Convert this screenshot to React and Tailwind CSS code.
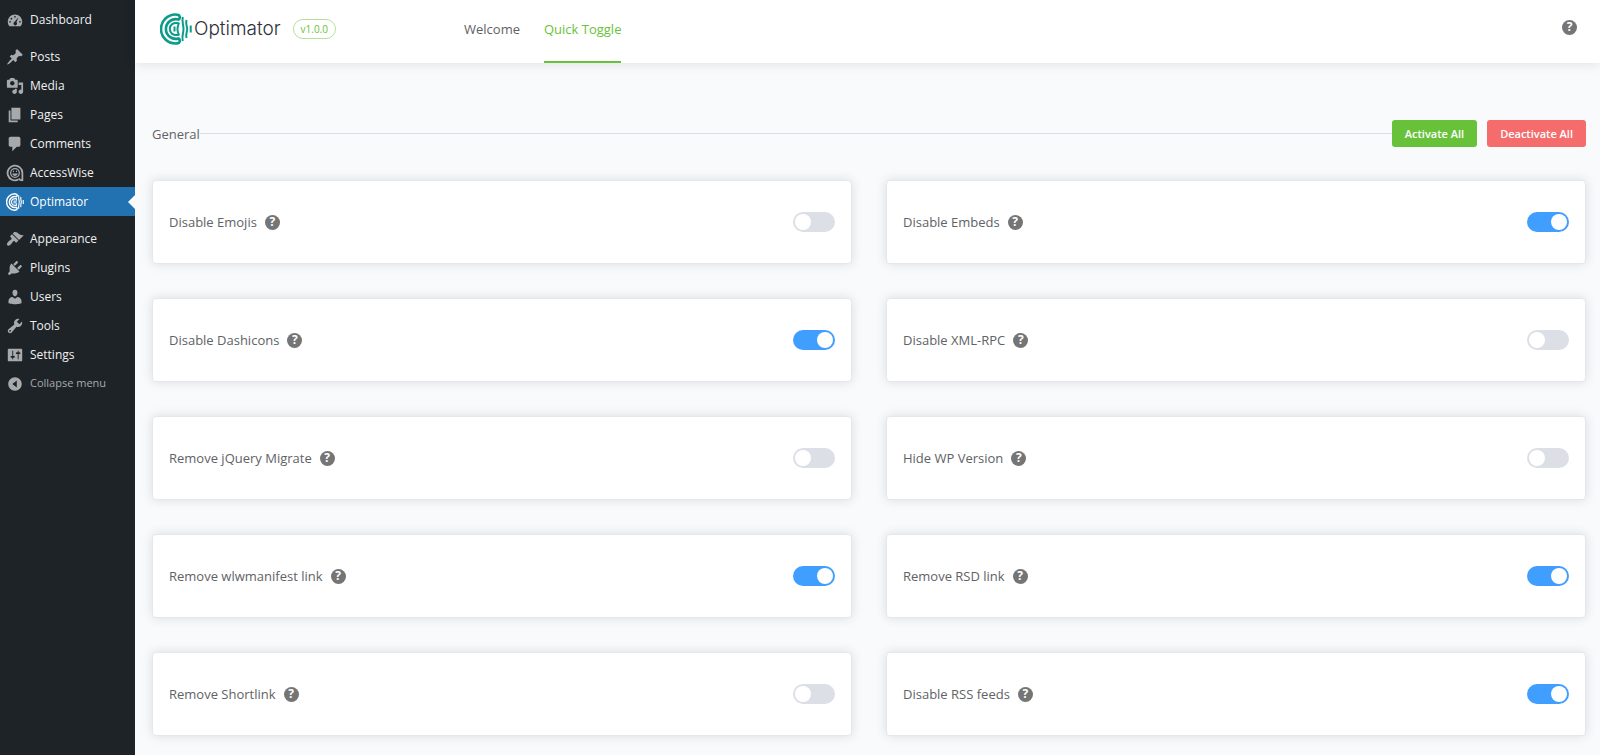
import { useState } from "react";

const icons = {
    dashboard:
        "M3.76 17h12.48c1.1-1.37 1.76-3.11 1.76-5 0-4.42-3.58-8-8-8s-8 3.58-8 8c0 1.89.66 3.63 1.76 5zM10 5.500c.55 0 1 .45 1 1s-.45 1-1 1-1-.45-1-1 .45-1 1-1zM6 7.500c.55 0 1 .45 1 1s-.45 1-1 1-1-.45-1-1 .45-1 1-1zM15.500 11c.55 0 1 .45 1 1s-.45 1-1 1-1-.45-1-1 .45-1 1-1zM4.500 11c.55 0 1 .45 1 1s-.45 1-1 1-1-.45-1-1 .45-1 1-1zM13.800 7l-2.200 5.500c.4.3.7.9.7 1.500 0 1.100-.9 2-2 2s-2-.9-2-2 .6-1.700 1.300-2z",
    posts: "M10.44 3.02l1.82-1.82 6.36 6.35-1.83 1.82c-1.05-.68-2.48-.57-3.41.36l-.75.75c-.92.93-1.04 2.35-.35 3.41l-1.83 1.82-2.41-2.41-2.8 2.79c-.42.42-3.38 2.71-3.8 2.29s1.86-3.39 2.28-3.81l2.79-2.79L4.1 9.36l1.83-1.82c1.05.69 2.48.57 3.4-.36l.75-.75c.93-.92 1.05-2.35.36-3.41z",
    media: "M13 11V4c0-.55-.45-1-1-1h-1.67L9 1H5L3.67 3H2c-.55 0-1 .45-1 1v7c0 .55.45 1 1 1h10c.55 0 1-.45 1-1zM7 4.5c1.38 0 2.5 1.12 2.5 2.5S8.38 9.5 7 9.5 4.5 8.38 4.5 7 5.62 4.5 7 4.5zM14 6h5v10.5c0 1.38-1.12 2.5-2.5 2.5S14 17.88 14 16.5s1.12-2.5 2.5-2.5c.17 0 .34.02.5.05V9h-3V6zm-4 8.05V13h2v3.5c0 1.38-1.12 2.5-2.5 2.5S7 17.88 7 16.5 8.12 14 9.5 14c.17 0 .34.02.5.05z",
    pages: "M6 15V2h10v13H6zm-1 1h8v2H3V5h2v11z",
    comments:
        "M5 2h9c1.1 0 2 .9 2 2v7c0 1.1-.9 2-2 2h-2l-5 5v-5H5c-1.1 0-2-.9-2-2V4c0-1.1.9-2 2-2z",
    appearance:
        "M14.48 11.06L7.41 3.99l1.5-1.5c.5-.56 2.3-.47 3.51.32 1.21.8 1.43 1.28 2.91 2.1 1.18.64 2.45 1.26 4.45.85zm-.71.71L6.7 4.7 4.93 6.47c-.39.39-.39 1.02 0 1.41l1.06 1.06c.39.39.39 1.03 0 1.42-.6.6-1.43 1.11-2.21 1.69-.35.26-.7.53-1.01.84C1.43 14.23.4 16.08 1.4 17.07c.99 1 2.84-.03 4.18-1.36.31-.31.58-.66.85-1.02.57-.78 1.08-1.61 1.69-2.21.39-.39 1.02-.39 1.41 0l1.06 1.06c.39.39 1.02.39 1.41 0z",
    plugins:
        "M13.11 4.36L9.87 7.6 8 5.73l3.24-3.24c.35-.34 1.05-.2 1.56.32.52.51.66 1.21.31 1.55zm-8 1.77l.91-1.12 9.01 9.01-1.19.84c-.71.71-2.63 1.16-3.82 1.16H6.14L4.9 17.26c-.59.59-1.54.59-2.12 0-.59-.58-.59-1.53 0-2.12l1.24-1.24v-3.88c0-1.13.4-3.19 1.09-3.89zm7.26 3.97l3.24-3.24c.34-.35 1.04-.21 1.55.31.52.51.66 1.21.31 1.55l-3.24 3.25z",
    users: "M10 9.25c-2.27 0-2.73-3.44-2.73-3.44C7 4.02 7.82 2 9.97 2c2.16 0 2.98 2.02 2.71 3.81 0 0-.41 3.44-2.68 3.44zm0 2.57L12.72 10c2.39 0 4.52 2.33 4.52 4.53v2.49s-3.65 1.13-7.24 1.13c-3.65 0-7.24-1.13-7.24-1.13v-2.49c0-2.25 1.94-4.48 4.47-4.48z",
    tools: "M16.68 9.77c-1.34 1.34-3.3 1.67-4.95.99l-5.41 6.52c-.99.99-2.59.99-3.58 0s-.99-2.59 0-3.57l6.52-5.42c-.68-1.65-.35-3.61.99-4.95 1.28-1.28 3.12-1.62 4.72-1.06l-2.89 2.89 2.82 2.82 2.86-2.87c.53 1.58.18 3.39-1.08 4.65zM3.81 16.21c.4.39 1.04.39 1.43 0 .4-.4.4-1.04 0-1.43-.39-.4-1.03-.4-1.43 0-.39.39-.39 1.03 0 1.43z",
    settings:
        "M18 16V4c0-.55-.45-1-1-1H3c-.55 0-1 .45-1 1v12c0 .55.45 1 1 1h14c.55 0 1-.45 1-1zM8 11h1c.55 0 1 .45 1 1s-.45 1-1 1H8v1.5c0 .28-.22.5-.5.5s-.5-.22-.5-.5V13H6c-.55 0-1-.45-1-1s.45-1 1-1h1V5.5c0-.28.22-.5.5-.5s.5.22.5.5V11zm5-2h-1c-.55 0-1-.45-1-1s.45-1 1-1h1V5.5c0-.28.22-.5.5-.5s.5.22.5.5V7h1c.55 0 1 .45 1 1s-.45 1-1 1h-1v5.5c0 .28-.22.5-.5.5s-.5-.22-.5-.5V9z",
    collapse:
        "M10 2.500c4.140 0 7.500 3.360 7.500 7.500s-3.360 7.500-7.500 7.500S2.500 14.140 2.500 10 5.860 2.500 10 2.500zM12 6l-5 4 5 4z",
};

const menuGroups = [
    [{ name: "Dashboard", icon: "dashboard" }],
    [
        { name: "Posts", icon: "posts" },
        { name: "Media", icon: "media" },
        { name: "Pages", icon: "pages" },
        { name: "Comments", icon: "comments" },
        { name: "AccessWise", icon: "accesswise" },
        { name: "Optimator", icon: "optimator", active: true },
    ],
    [
        { name: "Appearance", icon: "appearance" },
        { name: "Plugins", icon: "plugins" },
        { name: "Users", icon: "users" },
        { name: "Tools", icon: "tools" },
        { name: "Settings", icon: "settings" },
    ],
];

const options = [
    { id: "emojis", label: "Disable Emojis", enabled: false },
    { id: "embeds", label: "Disable Embeds", enabled: true },
    { id: "dashicons", label: "Disable Dashicons", enabled: true },
    { id: "xmlrpc", label: "Disable XML-RPC", enabled: false },
    { id: "jquery-migrate", label: "Remove jQuery Migrate", enabled: false },
    { id: "wp-version", label: "Hide WP Version", enabled: false },
    { id: "wlwmanifest", label: "Remove wlwmanifest link", enabled: true },
    { id: "rsd", label: "Remove RSD link", enabled: true },
    { id: "shortlink", label: "Remove Shortlink", enabled: false },
    { id: "rss", label: "Disable RSS feeds", enabled: true },
];

function OptimatorMark({ className }) {
    return (
        <svg
            viewBox="0 0 32 32"
            className={className}
            fill="none"
            stroke="currentColor"
            strokeWidth="2.600"
            strokeLinejoin="round"
        >
            <path d="M19 2.300C17.500 1.600 16.500 1.500 15.500 1.500A14.500 14.500 0 0 0 15.500 30.500C16.500 30.500 17.500 30.400 19 29.700C20.200 28 20 26.500 18.500 25.400A9.800 9.800 0 1 1 18.500 6.600C20 5.500 20.200 4 19 2.300z" />
            <path
                d="M18.800 10.300C13 9 9.800 12 9.800 16S13 23 18.800 21.700C17.300 18.500 17.300 13.500 18.800 10.300z"
                strokeWidth="2"
            />
            <path d="M14.500 13.500v5" strokeWidth="2" />
            <path
                d="M22.800 4C21.500 9.500 23.500 11 23.500 16S21.500 22.500 22.800 28"
                strokeWidth="2"
            />
            <path
                d="M26.500 7C25.400 11 27.200 13 27.200 16s-1.800 5-.7 9"
                strokeWidth="2"
            />
            <path d="M30.700 12.500v7" strokeWidth="2" />
        </svg>
    );
}

function MenuIcon({ name }) {
    if (name === "optimator") {
        return <OptimatorMark className="size-[18px]" />;
    }
    if (name === "accesswise") {
        return (
            <svg
                viewBox="0 0 20 20"
                className="size-[18px]"
                fill="none"
                stroke="currentColor"
                strokeWidth="2"
            >
                <path d="M18.200 19V10A8.200 8.200 0 1 0 13.500 17.400M14 16C15 17.500 16.500 18.200 18.200 18.200" />
                <circle cx="10" cy="10" r="4.800" strokeWidth="1.400" />
                <path
                    d="M7 10.500h6c0 3.600-6 3.600-6 0zM7.700 7.500h1.200v1.500H7.700zM11.100 7.500h1.200v1.500h-1.200z"
                    fill="currentColor"
                    stroke="none"
                />
            </svg>
        );
    }
    return (
        <svg
            viewBox="0 0 20 20"
            className="size-[18px]"
            fill="currentColor"
            fillRule="evenodd"
        >
            <path d={icons[name]} />
        </svg>
    );
}

function Sidebar() {
    return (
        <nav className="w-[135px] shrink-0 bg-[#1d2327] pt-[5px] text-xs">
            {menuGroups.map((group, index) => (
                <ul key={index} className="mb-2">
                    {group.map((item) => (
                        <li key={item.name}>
                            <a
                                href="#"
                                className={
                                    item.active
                                        ? "relative flex h-[29px] items-center gap-[6px] bg-[#2271b1] pl-[6px] text-white"
                                        : "flex h-[29px] items-center gap-[6px] pl-[6px] text-[#f0f0f1]"
                                }
                            >
                                <span
                                    className={
                                        item.active
                                            ? "text-white"
                                            : "text-[#a7aaad]"
                                    }
                                >
                                    <MenuIcon name={item.icon} />
                                </span>
                                {item.name}
                                {item.active && (
                                    <span className="absolute top-1/2 right-0 -translate-y-1/2 border-y-[7px] border-r-[7px] border-y-transparent border-r-[#f9fafc]" />
                                )}
                            </a>
                        </li>
                    ))}
                </ul>
            ))}
            <button
                type="button"
                className="-mt-2 flex h-[29px] items-center gap-[6px] pl-[6px] text-[11px] text-[#a7aaad]"
            >
                <MenuIcon name="collapse" />
                Collapse menu
            </button>
        </nav>
    );
}

function HelpButton({ label }) {
    return (
        <button
            type="button"
            aria-label={label}
            className="flex size-[15px] items-center justify-center rounded-full bg-[#757575] text-xs leading-none font-bold text-white"
        >
            ?
        </button>
    );
}

function ToggleCard({ option, onChange }) {
    return (
        <div className="flex h-[84px] items-center justify-between rounded-sm border border-[#e4e7ed] bg-white px-4 shadow-[0_0_12px_rgba(0,0,0,0.12)]">
            <div className="flex items-center gap-2">
                <label htmlFor={option.id}>{option.label}</label>
                <HelpButton label={`About ${option.label}`} />
            </div>
            <input
                id={option.id}
                type="checkbox"
                role="switch"
                checked={option.enabled}
                onChange={() => onChange(option.id)}
                className="flex h-5 w-[42px] cursor-pointer appearance-none items-center rounded-full bg-[#dcdfe6] px-[2px] before:size-4 before:rounded-full before:bg-white checked:justify-end checked:bg-[#409eff]"
            />
        </div>
    );
}

export default function App() {
    const [settings, setSettings] = useState(options);

    const toggle = (id) => {
        setSettings(
            settings.map((s) => (s.id === id ? { ...s, enabled: !s.enabled } : s))
        );
    };

    const setAll = (enabled) => {
        setSettings(settings.map((s) => ({ ...s, enabled })));
    };

    return (
        <div className="flex min-h-screen bg-[#f9fafc] font-['Open_Sans','Noto_Sans',sans-serif] text-[13px] leading-5 text-[#606266]">
            <Sidebar />
            <div className="min-w-0 flex-1">
                <header className="flex h-[63px] items-center bg-white pr-[23px] pl-[25px] shadow-[0_0_12px_rgba(0,0,0,0.12)]">
                    <div className="flex w-[304px] items-center pb-[6px]">
                        <OptimatorMark className="size-8 text-[#0b9b8a]" />
                        <span className="ml-[2px] font-['Inter',sans-serif] text-[19px] leading-6 font-light text-[#2d2f3a]">
                            Optimator
                        </span>
                        <span className="ml-3 flex h-5 items-center rounded-full border border-[#b3e19d] px-[7px] text-[10px] text-[#67c23a]">
                            v1.0.0
                        </span>
                    </div>
                    <nav className="flex h-full gap-6">
                        <a href="#" className="flex items-center pb-[6px]">
                            Welcome
                        </a>
                        <a
                            href="#"
                            className="flex items-center border-b-2 border-[#67c23a] pb-1 text-[#67c23a]"
                        >
                            Quick Toggle
                        </a>
                    </nav>
                    <div className="ml-auto pb-[9px]">
                        <HelpButton label="Help" />
                    </div>
                </header>

                <main className="pt-[57px] pr-[14px] pb-5 pl-[17px]">
                    <div className="mb-[33px] flex h-[27px] items-center">
                        <h2>General</h2>
                        <div className="h-px flex-1 bg-[#dcdfe6]" />
                        <button
                            type="button"
                            onClick={() => setAll(true)}
                            className="mr-[10px] h-[27px] rounded-[3px] bg-[#67c23a] px-[13px] text-[11px] font-semibold text-white"
                        >
                            Activate All
                        </button>
                        <button
                            type="button"
                            onClick={() => setAll(false)}
                            className="h-[27px] rounded-[3px] bg-[#f56c6c] px-[13px] text-[11px] font-semibold text-white"
                        >
                            Deactivate All
                        </button>
                    </div>
                    <div className="grid grid-cols-2 gap-[34px]">
                        {settings.map((option) => (
                            <ToggleCard
                                key={option.id}
                                option={option}
                                onChange={toggle}
                            />
                        ))}
                    </div>
                </main>
            </div>
        </div>
    );
}
